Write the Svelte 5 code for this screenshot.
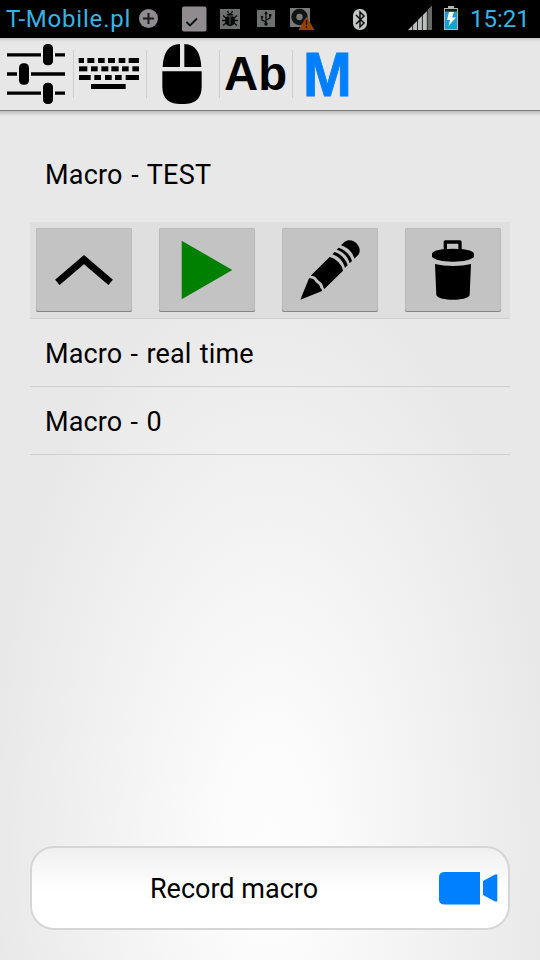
<script>
	let macros = $state([
		{ name: 'Macro - TEST', open: true },
		{ name: 'Macro - real time', open: false },
		{ name: 'Macro - 0', open: false }
	]);

	const signal = [0, 1, 2, 3];

	const keys = [
		{ y: 66, row: [[236, 16], [262, 21], [294, 20], [324, 21], [356, 20], [386, 31]] },
		{ y: 91, row: [[237, 25], [273, 20], [304, 21], [334, 22], [366, 20], [397, 20]] },
		{ y: 117, row: [[237, 35], [283, 20], [315, 20], [345, 20], [377, 40]] },
		{ y: 144, row: [[273, 104]] }
	];

	function toggle(macro) {
		macro.open = !macro.open;
	}
</script>

<div class="screen">
	<header class="status">
		<span class="carrier">T-Mobile.pl</span>
		<svg class="notes" width="240" height="38" viewBox="0 0 240 38">
			<!-- plus -->
			<circle cx="10.500" cy="18.500" r="9.500" fill="#8f8b8f" />
			<path d="M10.500 13v11M5 18.500h11" stroke="#1c1a1c" stroke-width="2" />
			<!-- check -->
			<rect x="44" y="6.500" width="24.500" height="25" rx="2" fill="#8f8b8f" />
			<path d="M48.500 22l3.500 3.500 7-7" fill="none" stroke="#0c100c" stroke-width="1.800" />
			<!-- bug -->
			<rect x="82" y="9" width="20" height="20" fill="#6c706f" />
			<ellipse cx="92" cy="20.500" rx="5" ry="5.700" fill="#080a09" />
			<path d="M88 15.500q4-5 8 0z" fill="#080a09" />
			<path d="M89.500 11l1 2M94.500 11l-1 2M88 18l-3-2.500M96 18l3-2.500M88 20.500h-4M96 20.500h4M88 23l-3 2.500M96 23l3 2.500" stroke="#080a09" stroke-width="1.300" />
			<path d="M92 16.500v8M87.500 16h9" stroke="#6c706f" stroke-width=".8" />
			<!-- usb -->
			<rect x="119" y="10" width="18" height="17" fill="#6c706f" />
			<path d="M128 13v11M128 22l-4-2v-3M128 20l4-2v-3" fill="none" stroke="#080a09" stroke-width="1.300" />
			<path d="M126.200 14l1.800-3 1.800 3z" fill="#080a09" />
			<circle cx="128" cy="24" r="1.700" fill="#080a09" />
			<circle cx="124" cy="17" r="1.200" fill="#080a09" />
			<rect x="131" y="14" width="2.400" height="2.400" fill="#080a09" />
			<!-- disk warning -->
			<rect x="152" y="8" width="20" height="19" fill="#777b79" />
			<circle cx="161.500" cy="17" r="5.700" fill="none" stroke="#101513" stroke-width="5" />
			<path d="M168.500 16.500L176.500 30h-16z" fill="#924209" />
			<path d="M168.500 20v5M168.500 26.300v1.700" stroke="#241006" stroke-width="1.400" />
			<!-- bluetooth -->
			<rect x="215" y="9" width="14" height="21" rx="6.500" fill="#c4c6c6" />
			<path d="M218 15l8 8-4 4V12l4 4-8 8" fill="none" stroke="#0a0a0a" stroke-width="1.500" />
		</svg>
		<svg class="power" width="56" height="38" viewBox="0 0 56 38">
			<path d="M0 30L24 6v24z" fill="#bdbfbf" />
			<path d="M19.500 10.500L24 6v24h-4.500z" fill="#666b68" />
			{#each signal as n}
				<path d="M{4.600 + n * 4.900} 5v25" stroke="#000" stroke-width=".8" />
			{/each}
			<path d="M40 6h6v2h4v22H36V8h4z" fill="#b4b6b6" />
			<path d="M37 9h12v3H37z" fill="#181b1b" />
			<path d="M37 11.500h12v17.500H37z" fill="#159fd8" />
			<path d="M41 12h5l-2 5.500h4L40.500 26l1.500-6h-3z" fill="#fff" />
		</svg>
		<span class="clock">15:21</span>
	</header>

	<nav class="tools">
		<button class="tool" aria-label="Settings">
			<svg viewBox="0 6 219 216">
				<path d="M21 56.500h102M165 56.500h30M21 114h30M93 114h102M21 171.500h102M165 171.500h30" stroke="#000" stroke-width="10" />
				<rect x="129" y="24" width="30" height="64" rx="13" />
				<rect x="57" y="82" width="30" height="64" rx="13" />
				<rect x="129" y="140" width="30" height="64" rx="13" />
			</svg>
		</button>
		<button class="tool" aria-label="Keyboard">
			<svg viewBox="219 6 219 216">
				{#each keys as line}
					{#each line.row as [x, w]}
						<rect {x} y={line.y} width={w} height="15" />
					{/each}
				{/each}
			</svg>
		</button>
		<button class="tool" aria-label="Mouse">
			<svg viewBox="3 6 219 216">
				<path d="M105 24v69H53C55 52 69 25 105 24zM118 24v69h51C167 52 153 25 118 24z" />
				<path d="M52 106h118v43c0 36-15 55-59 55s-59-19-59-55z" />
			</svg>
		</button>
		<button class="tool" aria-label="Text">
			<svg viewBox="222 6 219 216">
				<text x="237" y="162" font-size="142">Ab</text>
			</svg>
		</button>
		<button class="tool" aria-label="Macros">
			<svg viewBox="441 6 219 216">
				<text class="active" transform="translate(474 180) scale(.92 1)" font-size="191">M</text>
			</svg>
		</button>
	</nav>

	<main>
		<ul class="list">
			{#each macros as macro}
				<li class:open={macro.open}>
					<button class="name" onclick={() => toggle(macro)}>{macro.name}</button>
					{#if macro.open}
						<div class="actions">
							<button aria-label="Collapse" onclick={() => toggle(macro)}>
								<svg viewBox="48 264 288 252">
									<path d="M112 427L192 359l80 68" fill="none" stroke="#000" stroke-width="21" />
								</svg>
							</button>
							<button aria-label="Play">
								<svg viewBox="417 264 288 252">
									<path d="M485 302l152 88-152 88z" fill="#008000" />
								</svg>
							</button>
							<button aria-label="Edit">
								<svg viewBox="51 54 288 252">
									<path d="M106 269l26-64c8-1 15 2 18 8 3 7 14 9 15 17 1 6 7 6 6 13z" />
									<path d="M137 197l57-56c18 4 37 22 40 41l-56 55c-4-3-3-11-7-16-5-6-11-8-15-14-4-7-10-10-19-10z" />
									<path d="M202 133l7-7c18 5 34 22 39 40l-8 8c-5-20-19-35-38-41zM215 119l6-6c19 5 35 22 40 40l-7 7c-5-20-20-35-39-41z" />
									<path d="M228 106l10-10c13-9 29-5 39 7 9 12 9 23 3 31l-12 12c-5-20-21-34-40-40z" />
								</svg>
							</button>
							<button aria-label="Delete">
								<svg viewBox="420 54 288 252">
									<path d="M541 122V96h44v26" fill="none" stroke="#000" stroke-width="10" stroke-linejoin="round" />
									<path d="M501 132c0-8 18-12 32-14q31-3 62 0c14 2 32 6 32 14v9c-9 8-28 14-63 14s-54-6-63-14z" />
									<path d="M510 162c30 8 78 8 108 0l-4 94c-8 18-92 18-100 0z" />
								</svg>
							</button>
						</div>
					{/if}
				</li>
			{/each}
		</ul>

		<button class="record">
			<span>Record macro</span>
			<svg width="60" height="34" viewBox="0 0 60 34">
				<path d="M6 1H42v32.500H6q-5-.5-5-5v-22.500q0-4.500 5-5z" />
				<path d="M45 10L57 3.500h2.300v27H57L45 24z" />
			</svg>
		</button>
	</main>
</div>

<style>
	:global(body) {
		margin: 0;
	}

	.screen {
		width: 540px;
		height: 960px;
		display: flex;
		flex-direction: column;
		overflow: hidden;
		font-family: Roboto, sans-serif;
		color: #000;
		background: #e7e7e7;
	}

	button {
		font: inherit;
		color: inherit;
		margin: 0;
		padding: 0;
		border: 0;
		background: none;
	}

	svg {
		display: block;
		flex: none;
	}

	.status {
		height: 38px;
		display: flex;
		align-items: center;
		background: #000;
		color: #33b5e5;
		font-size: 24px;
		line-height: 40px;
		white-space: nowrap;
	}

	.carrier {
		width: 132px;
		padding-left: 6px;
		letter-spacing: .8px;
	}

	.notes {
		margin-right: 30px;
	}

	.clock {
		padding-left: 6px;
	}

	.tools {
		height: 72px;
		display: flex;
		background: linear-gradient(#c6c6c6, #e2e2e2 3px, #e7e7e7 6px);
		border-bottom: 1px solid #7e7e7e;
		flex: none;
	}

	.tool {
		width: 73px;
		height: 72px;
		background: linear-gradient(#cdcdcd, #cdcdcd) left 12px / 1px 48px no-repeat;
	}

	.tool:first-child {
		background: none;
	}

	.tool svg {
		width: 73px;
		height: 72px;
	}

	.tool text {
		font-family: "Liberation Sans", Arial, sans-serif;
		font-weight: bold;
	}

	.tool .active {
		fill: #0080ff;
		stroke: #0080ff;
		stroke-width: 3px;
	}

	main {
		flex: 1;
		display: flex;
		flex-direction: column;
		justify-content: space-between;
		padding: 17px 30px 30px;
		background:
			linear-gradient(rgba(0, 0, 0, .18), rgba(0, 0, 0, 0) 5px),
			radial-gradient(ellipse 285px 590px at 50% 735px, #fdfdfd, #fcfcfc 15%, #e8e8e8);
	}

	.list {
		list-style: none;
		margin: 0;
		padding: 0;
	}

	.list li {
		border-bottom: 1px solid #cfcfcf;
	}

	.name {
		display: block;
		width: 100%;
		height: 67px;
		padding: 3px 0 0 15px;
		font-size: 27px;
		line-height: 64px;
		text-align: left;
		letter-spacing: .1px;
		word-spacing: 1.6px;
	}

	.open .name {
		height: 94px;
		padding-top: 1px;
		line-height: 93px;
		letter-spacing: .2px;
	}

	.actions {
		display: flex;
		gap: 27px;
		height: 84px;
		padding: 6px;
		background: #dfdfdf;
	}

	.actions button {
		width: 96px;
		height: 84px;
		border-radius: 2px;
		background: #c3c3c3;
		box-shadow: inset 0 -1px #858585, inset 0 0 0 1px #b9b9b9;
	}

	.actions svg {
		width: 96px;
		height: 84px;
	}

	.record {
		display: flex;
		align-items: center;
		box-sizing: border-box;
		height: 84px;
		padding: 0 10px 0 0;
		border: 2px solid #d6d6d6;
		border-radius: 24px;
		background: linear-gradient(#f0f0f0, #fff 55%);
		font-size: 27px;
	}

	.record span {
		flex: 1;
		padding: 2px 2px 0 0;
		text-align: center;
	}

	.record svg {
		fill: #0080ff;
	}
</style>
